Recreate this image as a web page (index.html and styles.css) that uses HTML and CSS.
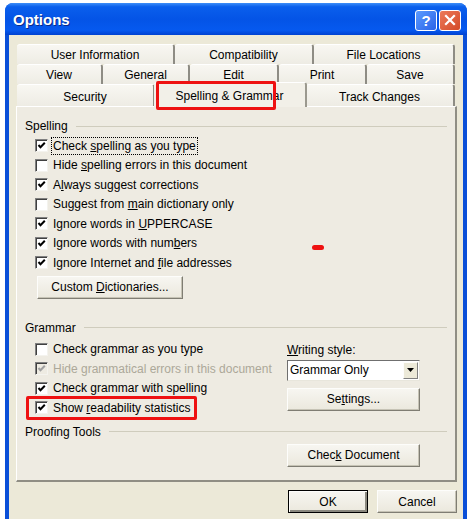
FILE: index.html
```html
<html>
    <head>
        <link rel="stylesheet" href="styles.css">
    </head>
    <body>
        <div class="window">
            <div class="titlebar">
                <span class="title">Options</span>
                <div class="caption-buttons">
                    <span class="cbtn help">?</span>
                    <span class="cbtn close">
                        <svg width="12" height="12" viewBox="0 0 12 12">
                            <path d="M2 2 L10 10 M10 2 L2 10" stroke="#fff" stroke-width="2.2" stroke-linecap="square"/>
                        </svg>
                    </span>
                </div>
            </div>
            <div class="client">
                <div class="tabs">
                    <div class="tab-row row-1">
                        <div class="tab">User Information</div>
                        <div class="tab">Compatibility</div>
                        <div class="tab">File Locations</div>
                    </div>
                    <div class="tab-row row-2">
                        <div class="tab">View</div>
                        <div class="tab">General</div>
                        <div class="tab">Edit</div>
                        <div class="tab">Print</div>
                        <div class="tab">Save</div>
                    </div>
                    <div class="tab-row row-3">
                        <div class="tab">Security</div>
                        <div class="tab selected">Spelling &amp; Grammar</div>
                        <div class="tab">Track Changes</div>
                    </div>
                </div>
                <div class="panel">
                    <div class="group-title"><span>Spelling</span></div>
                    <div class="checks spelling">
                        <label class="check on"><span class="box"></span><span class="focus">Check <u>s</u>pelling as you type</span></label>
                        <label class="check"><span class="box"></span><span>Hide <u>s</u>pelling errors in this document</span></label>
                        <label class="check on"><span class="box"></span><span>A<u>l</u>ways suggest corrections</span></label>
                        <label class="check"><span class="box"></span><span>Suggest from <u>m</u>ain dictionary only</span></label>
                        <label class="check on"><span class="box"></span><span>Ignore words in <u>U</u>PPERCASE</span></label>
                        <label class="check on"><span class="box"></span><span>Ignore words with num<u>b</u>ers</span></label>
                        <label class="check on"><span class="box"></span><span>Ignore Internet and <u>f</u>ile addresses</span></label>
                    </div>
                    <button class="btn dict">Custom <u>D</u>ictionaries...</button>

                    <div class="group-title grammar-title"><span>Grammar</span></div>
                    <div class="grammar">
                        <div class="checks">
                            <label class="check"><span class="box"></span><span>Check <u>g</u>rammar as you type</span></label>
                            <label class="check on disabled"><span class="box"></span><span>Hide grammatical errors in this document</span></label>
                            <label class="check on"><span class="box"></span><span>Check <u>g</u>rammar with spelling</span></label>
                            <label class="check on"><span class="box"></span><span>Show <u>r</u>eadability statistics</span></label>
                        </div>
                        <div class="side">
                            <div class="side-label"><u>W</u>riting style:</div>
                            <div class="combo">
                                <span class="combo-text">Grammar Only</span>
                                <span class="combo-arrow"></span>
                            </div>
                            <button class="btn side-btn settings">Se<u>t</u>tings...</button>
                        </div>
                    </div>

                    <div class="group-title proof-title"><span>Proofing Tools</span></div>
                    <div class="proof-row">
                        <button class="btn side-btn">Chec<u>k</u> Document</button>
                    </div>
                </div>
                <div class="dialog-buttons">
                    <button class="btn ok">OK</button>
                    <button class="btn">Cancel</button>
                </div>
            </div>

            <div class="mark mark-tab"></div>
            <div class="mark mark-stats"></div>
            <div class="dash"></div>
        </div>
    </body>
</html>
```

FILE: styles.css
```css
body {
    margin: 0;
    background: #ffffff;
    font-family: "Liberation Sans", Arial, sans-serif;
    font-size: 12px;
    color: #000000;
}
u {
    text-decoration: underline;
    text-underline-offset: 1px;
}
.window {
    position: relative;
    width: 462px;
    margin: 3px 0 0 5px;
    background: #0a4fd8;
    border-radius: 8px 8px 0 0;
}
.titlebar {
    height: 32px;
    display: flex;
    align-items: center;
    justify-content: space-between;
    padding: 0 6px 0 8px;
    border-radius: 8px 8px 0 0;
    background: linear-gradient(#3d8ef8 0, #0a5fec 12%, #0454e6 50%, #0659ef 85%, #0042d0 100%);
}
.title {
    color: #ffffff;
    font-weight: bold;
    font-size: 15px;
    text-shadow: 1px 1px 0 #0a2a8a;
}
.caption-buttons {
    display: flex;
    gap: 2px;
    margin-top: 2px;
}
.cbtn {
    width: 20px;
    height: 19px;
    border: 1px solid #ffffff;
    border-radius: 3px;
    display: flex;
    align-items: center;
    justify-content: center;
    color: #ffffff;
    font-weight: bold;
    font-size: 15px;
}
.help {
    background: linear-gradient(135deg, #5b9bff, #2a63e8);
}
.close {
    background: linear-gradient(135deg, #ec7a5a, #d44a27);
}
.client {
    margin: 0 4px 4px 4px;
    padding: 9px 6px 6px 7px;
    background: #ece9d8;
}
.tabs {
    padding: 0 1px;
}
.tab-row {
    display: grid;
}
.row-1 {
    grid-template-columns: 158px 139px 141px;
}
.row-2 {
    grid-template-columns: 86px 87px 89px 88px 88px;
}
.row-3 {
    grid-template-columns: 138px 151px 149px;
}
.tab {
    height: 20px;
    line-height: 21px;
    text-align: center;
    background: linear-gradient(#f8f7f2, #eeece4);
    border-top: 1px solid #ffffff;
    border-right: 2px solid #8e8c84;
    border-radius: 3px 3px 0 0;
    box-sizing: border-box;
}
.row-3 .tab {
    height: 22px;
    line-height: 25px;
}
.tab.selected {
    position: relative;
    margin: -2px -1px -1px -1px;
    height: 25px;
    line-height: 26px;
    background: #f2f0e8;
    border-right-color: #9b998f;
    z-index: 1;
}
.panel {
    height: 376px;
    box-sizing: border-box;
    padding: 12px 8px 0 8px;
    background: #eeebe2;
    border-top: 1px solid #ffffff;
    border-left: 1px solid #ffffff;
    border-right: 2px solid #908e84;
    border-bottom: 2px solid #908e84;
}
.group-title {
    display: flex;
    align-items: center;
    gap: 8px;
    height: 14px;
    line-height: 14px;
}
.group-title::after {
    content: "";
    flex: 1;
    border-top: 1px solid #cfccbd;
}
.checks {
    display: flex;
    flex-direction: column;
    padding-left: 10px;
}
.spelling {
    margin-top: 3px;
}
.check {
    height: 19.5px;
    display: flex;
    align-items: center;
    white-space: nowrap;
}
.box {
    width: 11px;
    height: 11px;
    margin-right: 5px;
    background: #ffffff;
    border-top: 1px solid #808080;
    border-left: 1px solid #808080;
    border-right: 1px solid #f4f3ee;
    border-bottom: 1px solid #f4f3ee;
    box-shadow: inset 1px 1px 0 #404040;
    flex: none;
}
.check.on .box {
    background: #ffffff url("data:image/svg+xml,%3Csvg xmlns='http://www.w3.org/2000/svg' width='11' height='11'%3E%3Cpath d='M2.5 5 L4.5 7.3 L8.8 2.8' fill='none' stroke='%23000' stroke-width='2'/%3E%3C/svg%3E") no-repeat center;
}
.check.disabled {
    color: #aca899;
}
.check.disabled .box {
    background: #eeebe2 url("data:image/svg+xml,%3Csvg xmlns='http://www.w3.org/2000/svg' width='11' height='11'%3E%3Cpath d='M2.5 5 L4.5 7.3 L8.8 2.8' fill='none' stroke='%23a0a0a0' stroke-width='2'/%3E%3C/svg%3E") no-repeat center;
}
.focus {
    outline: 1px dotted #000000;
    outline-offset: 1px;
}
.btn {
    font-family: inherit;
    font-size: 12px;
    color: #000000;
    height: 23px;
    padding: 0;
    background: linear-gradient(#f7f6f1, #ebe8dd);
    border: 1px solid;
    border-color: #fdfdfb #7f7d73 #7f7d73 #fdfdfb;
    box-shadow: inset -1px -1px 0 #c6c3b5;
}
.dict {
    width: 146px;
    margin: 3px 0 0 12px;
    display: block;
}
.grammar-title {
    margin-top: 22px;
}
.grammar {
    display: flex;
    margin-top: 5px;
}
.side {
    margin-left: auto;
    margin-right: 27px;
    width: 133px;
    padding-top: 3px;
}
.side-label {
    height: 14px;
    line-height: 14px;
}
.combo {
    margin-top: 3px;
    height: 21px;
    box-sizing: border-box;
    display: flex;
    align-items: center;
    justify-content: space-between;
    background: #ffffff;
    border-top: 1px solid #6f6f6f;
    border-left: 1px solid #6f6f6f;
    border-right: 1px solid #e8e6dc;
    border-bottom: 1px solid #e8e6dc;
    padding-left: 2px;
}
.combo-arrow {
    width: 15px;
    height: 17px;
    margin-right: 1px;
    background: #ece9d8 url("data:image/svg+xml,%3Csvg xmlns='http://www.w3.org/2000/svg' width='7' height='4'%3E%3Cpath d='M0 0 H7 L3.5 4 Z' fill='%23000'/%3E%3C/svg%3E") no-repeat center;
    box-sizing: border-box;
    border: 1px solid;
    border-color: #fdfdfb #808080 #808080 #fdfdfb;
}
.side-btn {
    width: 133px;
    display: block;
}
.settings {
    margin-top: 7px;
}
.proof-title {
    margin-top: 7px;
}
.proof-row {
    display: flex;
    justify-content: flex-end;
    margin: 5px 27px 0 0;
}
.dialog-buttons {
    display: flex;
    justify-content: flex-end;
    gap: 9px;
    margin-top: 8px;
}
.dialog-buttons .btn {
    width: 80px;
}
.ok {
    border: 1px solid #000000;
    box-shadow: inset 1px 1px 0 #fdfdfb, inset -2px -2px 0 #8a887e;
}
.mark {
    position: absolute;
    border: 3px solid #ee1111;
    border-radius: 2px;
    z-index: 2;
}
.mark-tab {
    left: 151px;
    top: 78px;
    width: 114px;
    height: 23px;
}
.mark-stats {
    left: 21px;
    top: 393px;
    width: 165px;
    height: 18px;
}
.dash {
    position: absolute;
    left: 307px;
    top: 242px;
    width: 12px;
    height: 5px;
    border-radius: 3px;
    background: #ee1111;
}
```
